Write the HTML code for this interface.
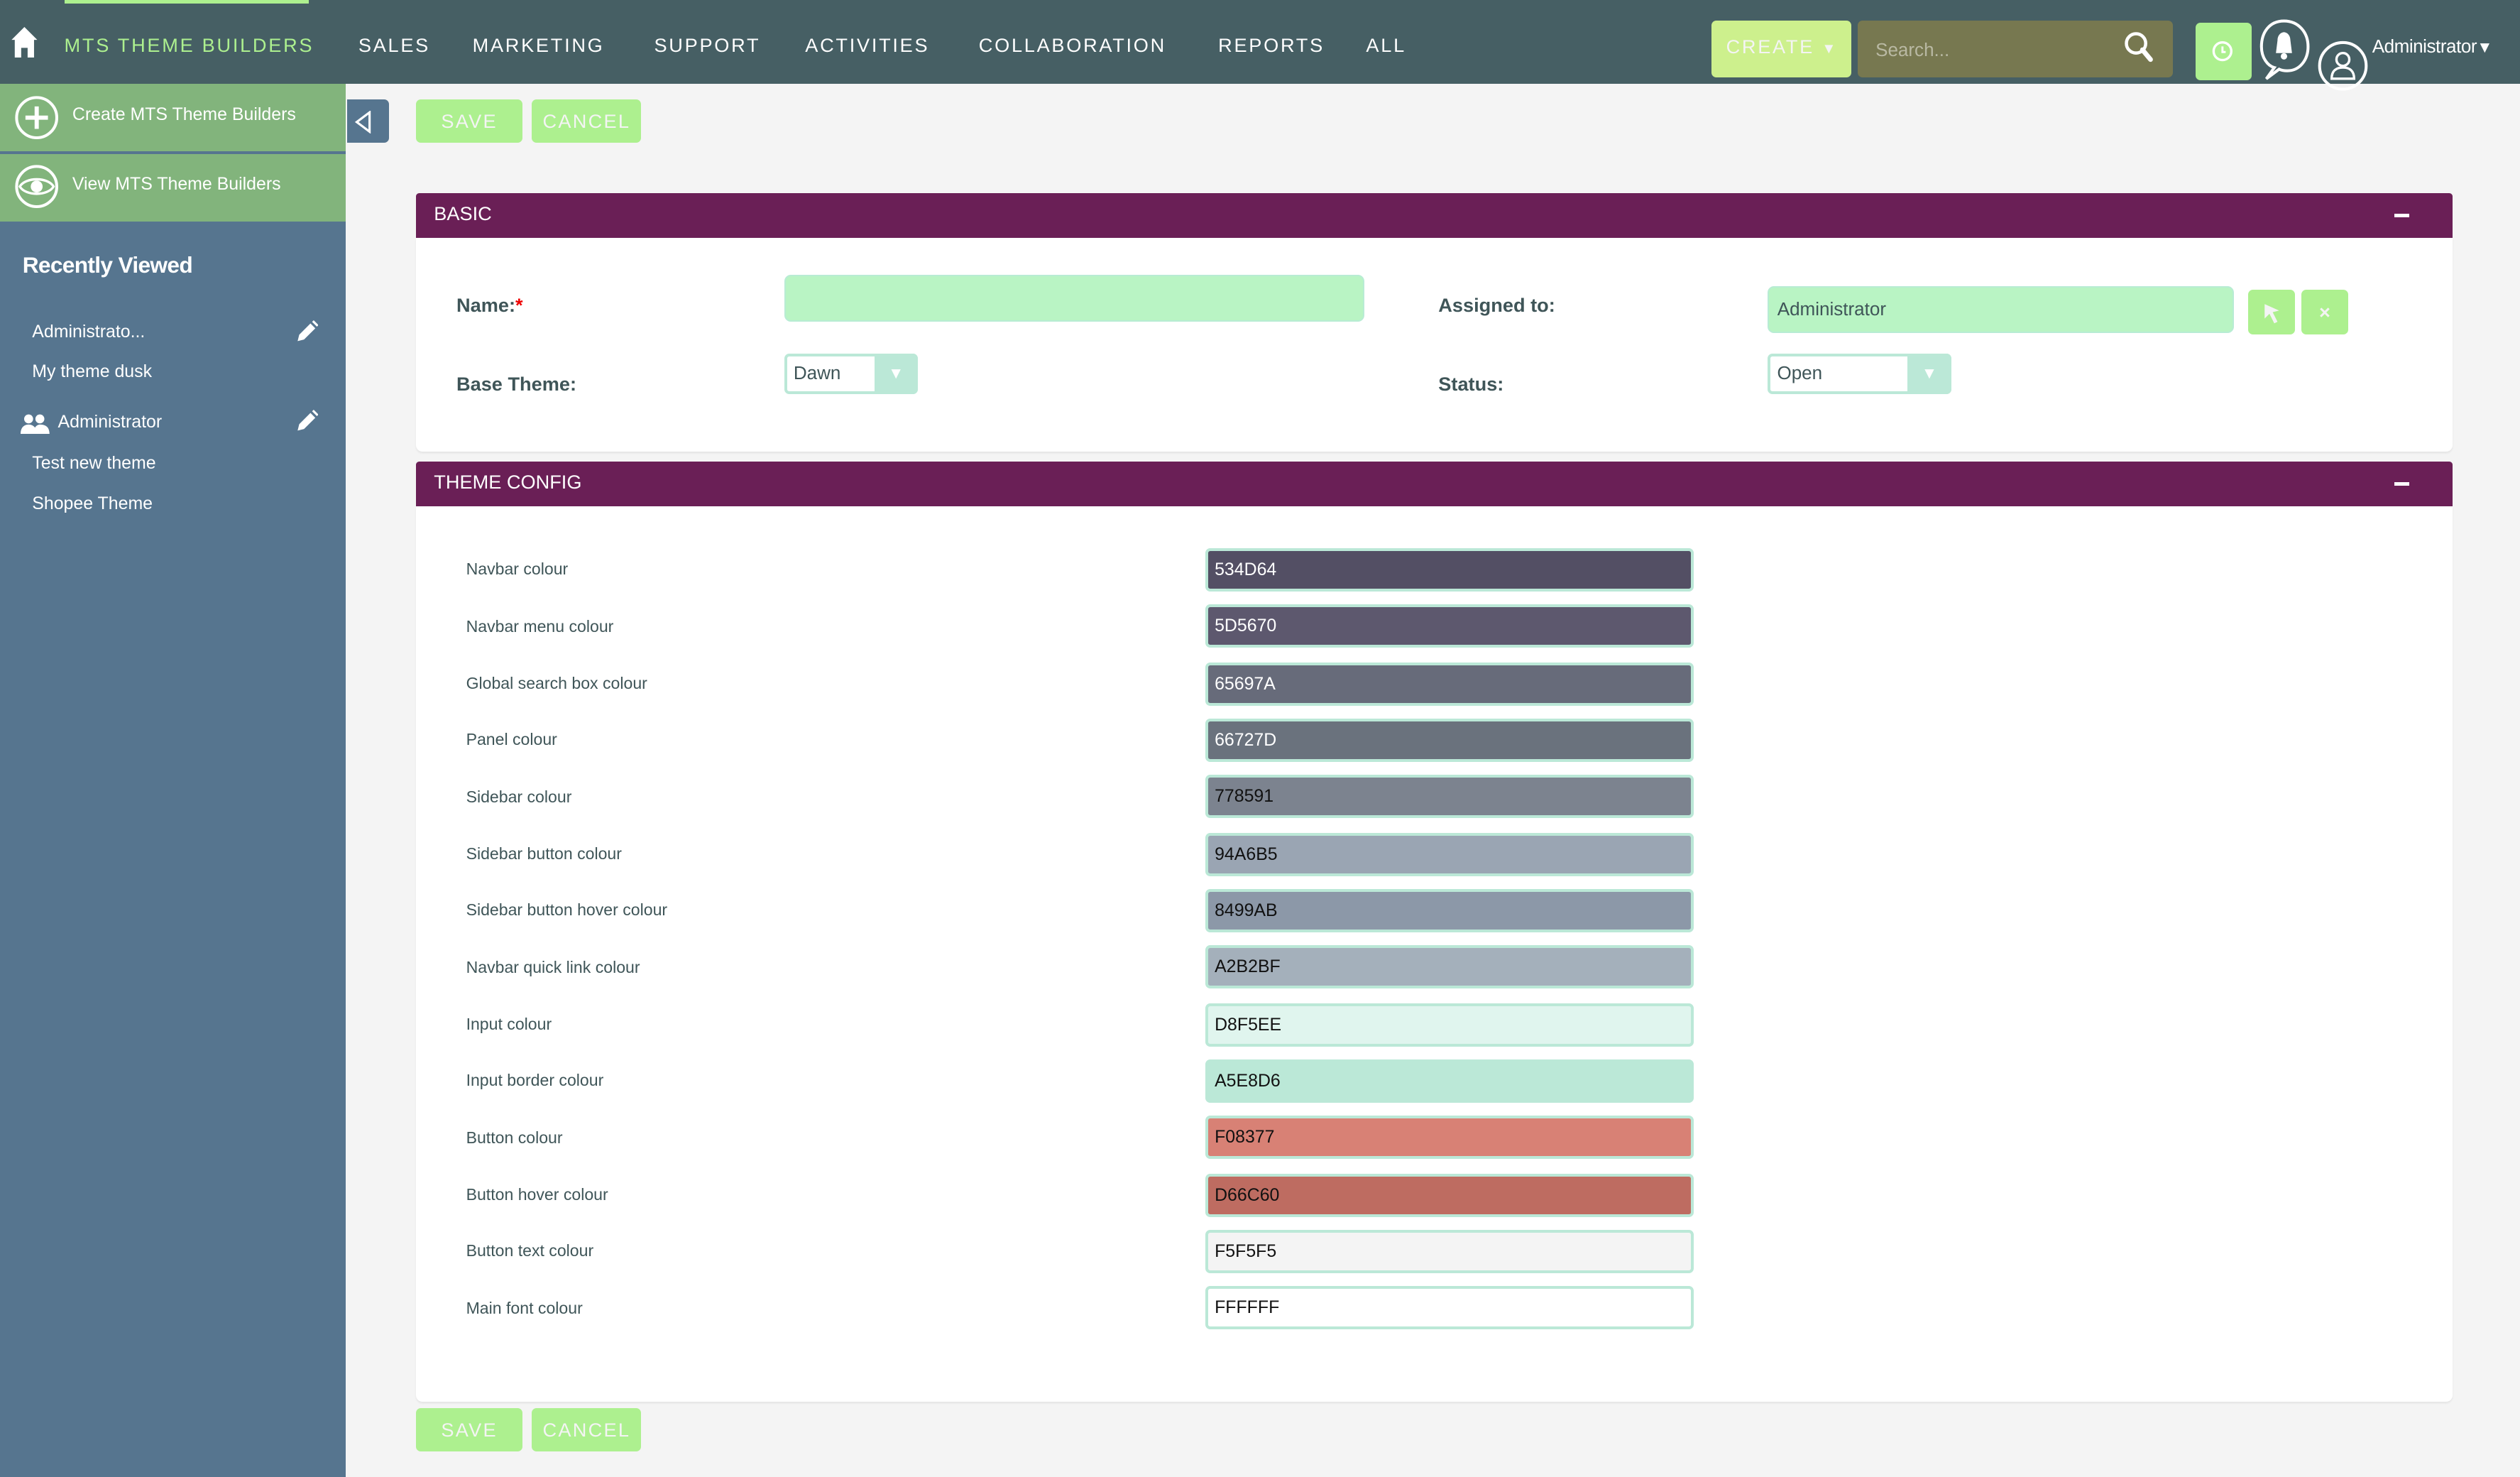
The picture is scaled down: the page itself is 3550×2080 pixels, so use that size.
<!DOCTYPE html>
<html><head><meta charset="utf-8">
<style>
*{box-sizing:border-box;margin:0;padding:0}
html,body{width:3550px;height:2080px;overflow:hidden;background:#f4f4f4}
#w{zoom:2.26403;width:1568px;height:919px;position:relative;font-family:"Liberation Sans",sans-serif;background:#f4f4f4}
.a{position:absolute}
#nav{left:0;top:0;width:1568px;height:52px;background:#465f64}
.nl{position:absolute;top:21px;font-size:12px;letter-spacing:1.2px;color:#fff}
.btn{position:absolute;background:#adf08f;color:#f4f4f4;border-radius:3px;font-size:12px;letter-spacing:1px;text-align:center;line-height:27px;height:27px}
.sb{position:absolute;color:#fff;font-size:11px}
.ph{position:absolute;left:259px;width:1267px;height:28px;background:#6a1f56;color:#fff;font-size:12px;line-height:26px;padding-left:11px;border-radius:2px 2px 0 0}
.ph i{position:absolute;right:27px;top:13px;width:9px;height:2px;background:#fff}
.pb{position:absolute;left:259px;width:1267px;background:#fff;border-radius:0 0 4px 4px;box-shadow:0 1px 1px #e6e6e6}
.lab{position:absolute;font-size:12px;font-weight:bold;color:#3f5558}
.cl{position:absolute;left:290px;font-size:10.2px;color:#3f5558}
.sw{position:absolute;left:750px;width:304px;height:27px;border:2px solid #bbe8d7;border-radius:3px;font-size:11px;line-height:23px;padding-left:4px;color:#111}
</style></head><body><div id="w">
<div class="a" id="nav"></div>
<div class="a" style="left:40px;top:0;width:152px;height:2px;background:#adf08f"></div>
<svg class="a" style="left:6px;top:17px" width="18" height="19" viewBox="0 0 18 19"><path d="M9 0 L17 8 L15 8 L15 19 L11 19 L11 13 L7 13 L7 19 L3 19 L3 8 L1 8 Z" fill="#fff"/></svg>
<div class="nl" style="left:40px;color:#adf08f">MTS THEME BUILDERS</div>
<div class="nl" style="left:223px">SALES</div>
<div class="nl" style="left:294px">MARKETING</div>
<div class="nl" style="left:407px">SUPPORT</div>
<div class="nl" style="left:501px">ACTIVITIES</div>
<div class="nl" style="left:609px">COLLABORATION</div>
<div class="nl" style="left:758px">REPORTS</div>
<div class="nl" style="left:850px">ALL</div>
<div class="a" style="left:1065px;top:13px;width:87px;height:35px;background:#cdf08d;border-radius:3px;color:#f4f4f4;font-size:12px;letter-spacing:1.2px;line-height:33px;padding-left:9px">CREATE <span style="font-size:9px">▼</span></div>
<div class="a" style="left:1156px;top:13px;width:196px;height:35px;background:#777850;border-radius:3px;color:#b9b9a3;font-size:11.5px;line-height:37px;padding-left:11px">Search...</div>
<svg class="a" style="left:1321px;top:19px" width="20" height="20" viewBox="0 0 20 20"><circle cx="8" cy="8" r="6" fill="none" stroke="#fff" stroke-width="2"/><path d="M12 12 L17 18" stroke="#fff" stroke-width="3" stroke-linecap="round"/></svg>
<div class="a" style="left:1366px;top:14px;width:35px;height:36px;background:#adf08f;border-radius:3px"></div>
<svg class="a" style="left:1376px;top:24px" width="14" height="16" viewBox="0 0 14 16"><circle cx="7" cy="8" r="5.5" fill="none" stroke="#fff" stroke-width="1.5"/><path d="M7 5 V8.5 H9" stroke="#fff" stroke-width="1.3" fill="none"/></svg>
<svg class="a" style="left:1404px;top:11px" width="34" height="40" viewBox="0 0 34 40"><path d="M17 2 C8 2 3 9 3 18 C3 25 7 30 11 31 L6 38 L14 32 C16 33 18 33 19 33 C27 33 32 26 32 18 C32 9 26 2 17 2 Z" fill="none" stroke="#fff" stroke-width="1.8"/><path d="M12 22 L13 14 C13 11 15 9 17 9 C19 9 21 11 21 14 L22 22 Z" fill="#fff"/><circle cx="17" cy="24" r="2" fill="#fff"/></svg>
<svg class="a" style="left:1441px;top:23px" width="34" height="36" viewBox="0 0 34 36"><circle cx="17" cy="18" r="14.5" fill="none" stroke="#fff" stroke-width="1.8"/><circle cx="17" cy="14" r="4" fill="none" stroke="#fff" stroke-width="1.5"/><path d="M10 26 C10 21 13 19 17 19 C21 19 24 21 24 26 Z" fill="none" stroke="#fff" stroke-width="1.5"/></svg>
<div class="a" style="left:1476px;top:22px;color:#fff;font-size:11.5px;letter-spacing:-0.2px">Administrator<span style="font-size:10px">▼</span></div>

<div class="a" style="left:0;top:52px;width:215px;height:867px;background:#56758f"></div>
<div class="a" style="left:0;top:52px;width:215px;height:42px;background:#82b47c"></div>
<div class="a" style="left:0;top:96px;width:215px;height:42px;background:#82b47c"></div>
<svg class="a" style="left:9px;top:59px" width="28" height="28" viewBox="0 0 28 28"><circle cx="14" cy="14" r="12.5" fill="none" stroke="#fff" stroke-width="1.8"/><path d="M14 7 V21 M7 14 H21" stroke="#fff" stroke-width="2.6"/></svg>
<div class="sb" style="left:45px;top:65px">Create MTS Theme Builders</div>
<svg class="a" style="left:9px;top:102px" width="28" height="28" viewBox="0 0 28 28"><circle cx="14" cy="14" r="12.5" fill="none" stroke="#fff" stroke-width="1.8"/><path d="M3.5 14 C7 8 21 8 24.5 14 C21 20 7 20 3.5 14 Z" fill="none" stroke="#fff" stroke-width="1.5"/><circle cx="14" cy="14" r="3.7" fill="#fff"/></svg>
<div class="sb" style="left:45px;top:108px">View MTS Theme Builders</div>
<div class="sb" style="left:14px;top:157px;font-size:14px;font-weight:bold;letter-spacing:-0.3px">Recently Viewed</div>
<div class="sb" style="left:20px;top:200px">Administrato...</div>
<div class="sb" style="left:20px;top:225px">My theme dusk</div>
<div class="sb" style="left:36px;top:256px">Administrator</div>
<div class="sb" style="left:20px;top:282px">Test new theme</div>
<div class="sb" style="left:20px;top:307px">Shopee Theme</div>
<svg class="a" style="left:184px;top:199px" width="14" height="14" viewBox="0 0 14 14"><path d="M1 13 L2 9 L9 2 L12 5 L5 12 Z M10 1 L11 0 L14 3 L13 4 Z" fill="#fff"/></svg>
<svg class="a" style="left:184px;top:255px" width="14" height="14" viewBox="0 0 14 14"><path d="M1 13 L2 9 L9 2 L12 5 L5 12 Z M10 1 L11 0 L14 3 L13 4 Z" fill="#fff"/></svg>
<svg class="a" style="left:13px;top:257px" width="18" height="13" viewBox="0 0 18 13"><circle cx="5" cy="3.5" r="2.8" fill="#fff"/><circle cx="12" cy="3.5" r="2.8" fill="#fff"/><path d="M0 13 C0 8 3 7 5 7 C7 7 10 8 10 13 Z M8 13 C8 9 10 7 12 7 C15 7 18 8 18 13 Z" fill="#fff"/></svg>

<div class="a" style="left:216px;top:62px;width:26px;height:27px;background:#56758f;border-radius:0 3px 3px 0"></div>
<svg class="a" style="left:220px;top:69px" width="12" height="14" viewBox="0 0 12 14"><path d="M10 1 L2 7 L10 13 Z" fill="none" stroke="#fff" stroke-width="1.4"/></svg>
<div class="btn" style="left:259px;top:62px;width:66px">SAVE</div>
<div class="btn" style="left:331px;top:62px;width:68px">CANCEL</div>

<div class="ph" style="top:120px">BASIC<i></i></div>
<div class="pb" style="top:148px;height:133px"></div>
<div class="lab" style="left:284px;top:183px">Name:<span style="color:#e00">*</span></div>
<div class="a" style="left:488px;top:171px;width:361px;height:29px;background:#b9f4c4;border:1px solid #b8ecd4;border-radius:4px"></div>
<div class="lab" style="left:284px;top:232px">Base Theme:</div>
<div class="a" style="left:488px;top:220px;width:83px;height:25px;border:2px solid #bbe8d7;border-radius:3px;background:#fff;font-size:11.5px;color:#3f5558;line-height:21px;padding-left:4px">Dawn</div>
<div class="a" style="left:544px;top:220px;width:27px;height:25px;background:#bbe8d7;border-radius:0 3px 3px 0;color:#fff;font-size:10px;text-align:center;line-height:25px">▼</div>
<div class="lab" style="left:895px;top:183px">Assigned to:</div>
<div class="a" style="left:1100px;top:178px;width:290px;height:29px;background:#b9f4c4;border:1px solid #b8ecd4;border-radius:4px;font-size:11.5px;color:#3f5558;line-height:27px;padding-left:5px">Administrator</div>
<div class="a" style="left:1399px;top:180px;width:29px;height:28px;background:#adf08f;border-radius:3px"></div>
<svg class="a" style="left:1408px;top:188px" width="12" height="14" viewBox="0 0 12 14"><path d="M1 1 L10 5 L6 6 L9 12 L7 13 L4 7 L1 10 Z" fill="#f4f4f4"/></svg>
<div class="a" style="left:1432px;top:180px;width:29px;height:28px;background:#adf08f;border-radius:3px;color:#f4f4f4;font-size:12px;font-weight:bold;text-align:center;line-height:28px">×</div>
<div class="lab" style="left:895px;top:232px">Status:</div>
<div class="a" style="left:1100px;top:220px;width:114px;height:25px;border:2px solid #bbe8d7;border-radius:3px;background:#fff;font-size:11.5px;color:#3f5558;line-height:21px;padding-left:4px">Open</div>
<div class="a" style="left:1187px;top:220px;width:27px;height:25px;background:#bbe8d7;border-radius:0 3px 3px 0;color:#fff;font-size:10px;text-align:center;line-height:25px">▼</div>

<div class="ph" style="top:287px">THEME CONFIG<i></i></div>
<div class="pb" style="top:315px;height:557px"></div>

<div class="cl" style="top:348px">Navbar colour</div><div class="sw" style="top:341px;background:#534f64;color:#fff">534D64</div>
<div class="cl" style="top:384px">Navbar menu colour</div><div class="sw" style="top:376px;background:#5d586e;color:#fff">5D5670</div>
<div class="cl" style="top:419px">Global search box colour</div><div class="sw" style="top:412px;background:#676b7a;color:#fff">65697A</div>
<div class="cl" style="top:454px">Panel colour</div><div class="sw" style="top:447px;background:#6a727d;color:#fff">66727D</div>
<div class="cl" style="top:490px">Sidebar colour</div><div class="sw" style="top:482px;background:#7c838f">778591</div>
<div class="cl" style="top:525px">Sidebar button colour</div><div class="sw" style="top:518px;background:#9aa5b3">94A6B5</div>
<div class="cl" style="top:560px">Sidebar button hover colour</div><div class="sw" style="top:553px;background:#8c98a8">8499AB</div>
<div class="cl" style="top:596px">Navbar quick link colour</div><div class="sw" style="top:588px;background:#a4b0bb">A2B2BF</div>
<div class="cl" style="top:631px">Input colour</div><div class="sw" style="top:624px;background:#e0f5ee">D8F5EE</div>
<div class="cl" style="top:666px">Input border colour</div><div class="sw" style="top:659px;background:#bbe8d7">A5E8D6</div>
<div class="cl" style="top:702px">Button colour</div><div class="sw" style="top:694px;background:#d88175">F08377</div>
<div class="cl" style="top:737px">Button hover colour</div><div class="sw" style="top:730px;background:#be6c61">D66C60</div>
<div class="cl" style="top:772px">Button text colour</div><div class="sw" style="top:765px;background:#f4f4f4">F5F5F5</div>
<div class="cl" style="top:808px">Main font colour</div><div class="sw" style="top:800px;background:#fff">FFFFFF</div>

<div class="btn" style="left:259px;top:876px;width:66px">SAVE</div>
<div class="btn" style="left:331px;top:876px;width:68px">CANCEL</div>
</div></body></html>
